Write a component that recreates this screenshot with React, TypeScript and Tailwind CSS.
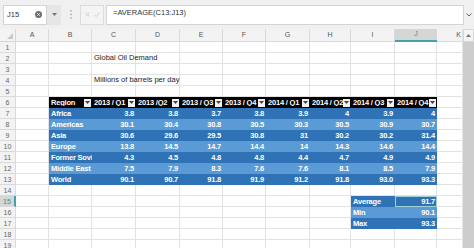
import React from 'react';

const COLS = ['A', 'B', 'C', 'D', 'E', 'F', 'G', 'H', 'I', 'J', 'K'];
const HEADERS = ['Region', '2013 / Q1', '2013 /Q2', '2013 / Q3', '2013 / Q4', '2014 / Q1', '2014 / Q2', '2014 / Q3', '2014 / Q4'];
const DATA: [string, ...string[]][] = [
  ['Africa', '3.8', '3.8', '3.7', '3.8', '3.9', '4', '3.9', '4'],
  ['Americas', '30.1', '30.4', '30.8', '30.5', '30.3', '30.5', '30.9', '30.7'],
  ['Asia', '30.6', '29.6', '29.5', '30.8', '31', '30.2', '30.2', '31.4'],
  ['Europe', '13.8', '14.5', '14.7', '14.4', '14', '14.3', '14.6', '14.4'],
  ['Former Soviet Union', '4.3', '4.5', '4.8', '4.8', '4.4', '4.7', '4.9', '4.9'],
  ['Middle East', '7.5', '7.9', '8.3', '7.6', '7.6', '8.1', '8.5', '7.9'],
  ['World', '90.1', '90.7', '91.8', '91.9', '91.2', '91.8', '93.0', '93.3'],
];
const STATS = [
  ['Average', '91.7'],
  ['Min', '90.1'],
  ['Max', '93.3'],
];

const DARK = 'bg-[#2f73b6]';
const LIGHT = 'bg-[#5b9bd5]';

const Cell: React.FC<{ r: number; c: number }> = ({ r, c }) => {
  const plain = 'h-[11px] border-r border-b border-[#e2e2e2] bg-white';

  // table header row
  if (r === 6 && c >= 1 && c <= 9) {
    return (
      <div className="h-[11px] bg-black flex items-center overflow-hidden">
        <span className="flex-1 overflow-hidden whitespace-nowrap pl-[2px] text-white font-bold text-[7.5px] leading-none tracking-[-0.2px]">
          {HEADERS[c - 1]}
        </span>
        <span className="shrink-0 w-[7px] h-[8px] mr-[1px] bg-[#f2f2f2] flex items-center justify-center">
          <svg width="5" height="3" viewBox="0 0 5 3"><path d="M0 0h5L2.5 3z" fill="#444" /></svg>
        </span>
      </div>
    );
  }

  // table body
  if (r >= 7 && r <= 13 && c >= 1 && c <= 9) {
    const bg = r % 2 === 1 ? DARK : LIGHT;
    const txt = DATA[r - 7][c - 1];
    return (
      <div
        className={`h-[11px] ${bg} flex items-center overflow-hidden whitespace-nowrap text-white font-bold text-[7.5px] leading-none tracking-[-0.2px] ${
          c === 1 ? 'pl-[2px] justify-start' : 'pr-[2px] justify-end'
        }`}
      >
        {txt}
      </div>
    );
  }

  // stats block
  if (r >= 15 && r <= 17 && (c === 8 || c === 9)) {
    const bg = r === 16 ? LIGHT : DARK;
    const txt = STATS[r - 15][c - 8];
    const selected = r === 15 && c === 9;
    return (
      <div
        className={`relative h-[11px] ${bg} flex items-center overflow-hidden whitespace-nowrap text-white font-bold text-[7.5px] leading-none tracking-[-0.2px] ${
          c === 8 ? 'pl-[2px] justify-start' : 'pr-[2px] justify-end'
        } ${selected ? 'outline outline-1 outline-offset-[-1px] outline-[#9fd0d6]' : ''}`}
      >
        {txt}
      </div>
    );
  }

  // titles spill over into the empty cells on their right
  if (c === 2 && (r === 2 || r === 4)) {
    return (
      <div className={`${plain} relative z-10 flex items-center pl-[2px] whitespace-nowrap text-[7.5px] leading-none text-[#222]`}>
        {r === 2 ? 'Global Oil Demand' : 'Millions of barrels per day'}
      </div>
    );
  }

  return <div className={plain} />;
};

const App: React.FC = () => {
  const rows = Array.from({ length: 19 }, (_, i) => i + 1);
  return (
    <div className="w-[474px] h-[248px] overflow-hidden bg-white flex flex-col" style={{ fontFamily: '"Liberation Sans", Arial, sans-serif' }}>
      {/* formula bar */}
      <div className="h-[29px] shrink-0 bg-[#f0f0f0] flex items-center pl-[3px]">
        <div className="w-[44px] h-[20px] bg-white border border-[#d4d4d4] flex items-center pl-[3px] pr-[4px]">
          <span className="flex-1 text-[7.5px] text-[#333]">J15</span>
          <svg width="7" height="7" viewBox="0 0 8 8">
            <circle cx="4" cy="4" r="4" fill="#6e6e6e" />
            <path d="M2.6 2.6l2.8 2.8M5.4 2.6L2.6 5.4" stroke="#fff" strokeWidth="1" />
          </svg>
        </div>
        <div className="w-[14px] h-[20px] bg-[#e6e6e6] flex items-center justify-center">
          <svg width="5" height="3" viewBox="0 0 5 3"><path d="M0 0h5L2.5 3z" fill="#777" /></svg>
        </div>
        <div className="w-[19px] flex items-center justify-center">
          <svg width="2" height="9" viewBox="0 0 2 9">
            <circle cx="1" cy="1" r="0.8" fill="#999" />
            <circle cx="1" cy="4.5" r="0.8" fill="#999" />
            <circle cx="1" cy="8" r="0.8" fill="#999" />
          </svg>
        </div>
        <div className="w-[24px] h-[20px] bg-[#f4f4f4] border border-[#dcdcdc] flex items-center justify-center gap-[4px]">
          <svg width="5" height="5" viewBox="0 0 5 5"><path d="M0.5 0.5l4 4M4.5 0.5l-4 4" stroke="#c4c4c4" strokeWidth="0.8" /></svg>
          <svg width="6" height="5" viewBox="0 0 6 5"><path d="M0.5 2.8l1.7 1.7L5.5 0.5" stroke="#c4c4c4" strokeWidth="0.8" fill="none" /></svg>
        </div>
        <div className="ml-[2px] w-[358px] h-[20px] bg-white border border-[#d4d4d4] pl-[6px] pt-[3px] text-[7.5px] leading-none text-[#333]">
          =AVERAGE(C13:J13)
        </div>
        <div className="flex-1 flex items-center justify-center">
          <svg width="6" height="4" viewBox="0 0 6 4"><path d="M0.5 0.5L3 3l2.5-2.5" stroke="#666" strokeWidth="1" fill="none" /></svg>
        </div>
      </div>

      {/* sheet */}
      <div className="flex-1 flex overflow-hidden">
        <div className="w-[462px] overflow-hidden">
          <div className="grid grid-cols-[16px_33px_43px_44px_44px_43px_43px_44px_41px_44px_42px_44px] w-max">
            {/* column headers */}
            <div className="h-[13px] bg-[#f3f3f3] border-r border-b border-[#d6d6d6] relative">
              <svg className="absolute right-[2px] bottom-[2px]" width="6" height="6" viewBox="0 0 6 6"><path d="M6 0v6H0z" fill="#c8c8c8" /></svg>
            </div>
            {COLS.map((l) => (
              <div
                key={l}
                className={`h-[13px] flex items-center justify-center text-[7px] ${
                  l === 'J'
                    ? 'bg-[#d6d6d6] border-b-2 border-[#3fa3a9] text-[#3f8f95]'
                    : 'bg-[#f3f3f3] border-r border-b border-[#dadada] text-[#555]'
                }`}
              >
                {l}
              </div>
            ))}

            {rows.map((r) => (
              <React.Fragment key={r}>
                <div
                  className={`h-[11px] flex items-center justify-center text-[7px] leading-none ${
                    r === 15
                      ? 'bg-[#d6d6d6] border-r-2 border-b border-r-[#3fa3a9] border-b-[#dadada] text-[#3f8f95]'
                      : 'bg-[#f3f3f3] border-r border-b border-[#dadada] text-[#666]'
                  }`}
                >
                  {r}
                </div>
                {COLS.map((_, c) => (
                  <Cell key={c} r={r} c={c} />
                ))}
              </React.Fragment>
            ))}
          </div>
        </div>

        {/* vertical scrollbar */}
        <div className="flex-1 flex flex-col bg-[#cdcdcd] border-l border-[#e4e4e4]">
          <div className="h-[13px] bg-[#f4f4f4] border border-[#d6d6d6] flex items-center justify-center">
            <svg width="5" height="3" viewBox="0 0 5 3"><path d="M0 3h5L2.5 0z" fill="#777" /></svg>
          </div>
        </div>
      </div>
    </div>
  );
};

export default App;
